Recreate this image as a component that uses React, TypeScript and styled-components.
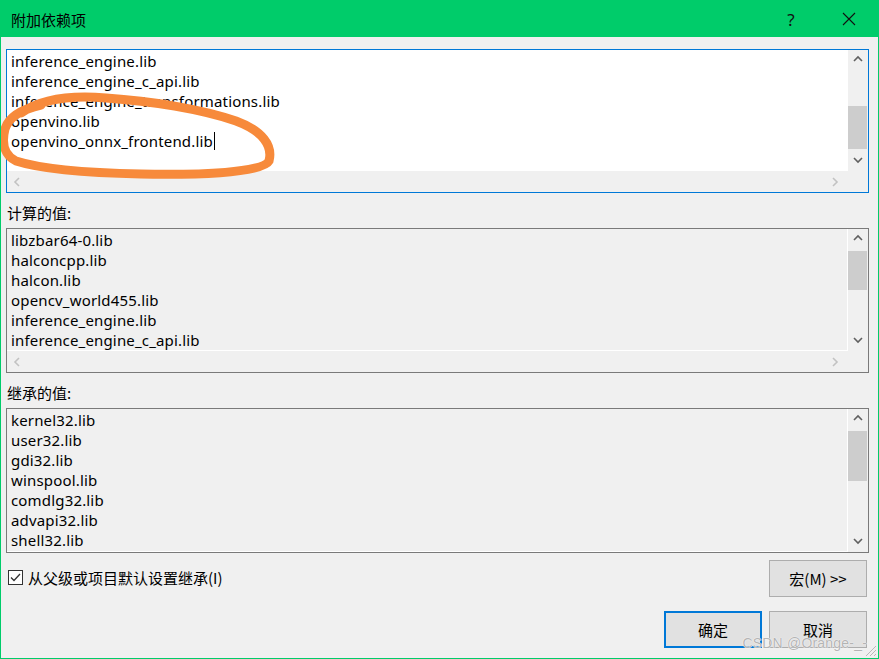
import React from "react";
import styled, { createGlobalStyle } from "styled-components";

const GlobalStyle = createGlobalStyle`
  html, body { margin: 0; padding: 0; background: #ffffff; }
  body { font-family: "Noto Sans", "Noto Sans CJK SC", sans-serif; }
  * { box-sizing: border-box; }
`;

const ACCENT = "#00CC6A";

const Window = styled.div`
  position: relative;
  width: 879px;
  height: 659px;
  border: 1px solid ${ACCENT};
  background: #f0f0f0;
  display: flex;
  flex-direction: column;
  overflow: hidden;
`;

const TitleBar = styled.div`
  height: 36px;
  background: ${ACCENT};
  display: flex;
  align-items: center;
  padding-left: 10px;
  flex: none;
`;

const TitleText = styled.div`
  flex: 1;
  font-family: "Noto Sans CJK SC", sans-serif;
  font-size: 15px;
  color: #000;
`;

const CaptionButton = styled.div`
  width: 58px;
  height: 36px;
  display: flex;
  align-items: center;
  justify-content: center;
  font-family: "Noto Sans", sans-serif;
  font-size: 17px;
  color: #111;
`;

const Content = styled.div`
  flex: 1;
  display: flex;
  flex-direction: column;
  padding: 12px 9px 0 5px;
`;

const ListBox = styled.div<{ $focused?: boolean; $h?: boolean; $height: number }>`
  height: ${(p) => p.$height}px;
  flex: none;
  border: 1px solid ${(p) => (p.$focused ? "#0078d7" : "#7a7a7a")};
  background: #f0f0f0;
  display: grid;
  grid-template-columns: 1fr 20px;
  grid-template-rows: ${(p) => (p.$h ? "1fr 21px" : "1fr")};
`;

const ListArea = styled.div<{ $white?: boolean }>`
  background: ${(p) => (p.$white ? "#ffffff" : "#f0f0f0")};
  border-right: 1px solid #ffffff;
  border-bottom: 1px solid #ffffff;
  padding: 1px 4px;
  overflow: hidden;
  font-family: "Noto Sans", "Noto Sans CJK SC", sans-serif;
  font-size: 15px;
  letter-spacing: 0.17px;
  line-height: 20px;
  color: #000;
`;

const Line = styled.div`
  white-space: nowrap;
  height: 20px;
  display: flex;
  align-items: center;
`;

const Caret = styled.span`
  display: inline-block;
  width: 1px;
  height: 18px;
  background: #000;
  margin-left: 1px;
`;

const VScroll = styled.div`
  background: #f0f0f0;
  display: flex;
  flex-direction: column;
`;

const ArrowBox = styled.div`
  height: 20px;
  flex: none;
  display: flex;
  align-items: center;
  justify-content: center;
`;

const Track = styled.div`
  flex: 1;
  display: flex;
  flex-direction: column;
`;

const Thumb = styled.div<{ $offset: number; $size: number }>`
  margin-top: ${(p) => p.$offset}px;
  height: ${(p) => p.$size}px;
  width: 19px;
  background: #cdcdcd;
`;

const HScroll = styled.div`
  grid-column: 1 / 3;
  background: #f0f0f0;
  display: flex;
  align-items: center;
  justify-content: space-between;
  padding: 0 28px 0 6px;
`;

const Label = styled.div`
  margin-top: 10px;
  margin-bottom: 5px;
  height: 20px;
  line-height: 20px;
  padding-left: 1px;
  font-family: "Noto Sans CJK SC", sans-serif;
  font-size: 15px;
  color: #000;
`;

const OptionRow = styled.div`
  margin-top: 7px;
  display: flex;
  justify-content: space-between;
  align-items: flex-start;
  padding-right: 2px;
`;

const CheckLabel = styled.label`
  display: flex;
  align-items: center;
  gap: 5px;
  margin-top: 7px;
  margin-left: 2px;
  font-family: "Noto Sans CJK SC", sans-serif;
  font-size: 15px;
  color: #000;
`;

const CheckBox = styled.span`
  width: 15px;
  height: 15px;
  border: 1px solid #333;
  background: #fff;
  display: flex;
  align-items: center;
  justify-content: center;
`;

const Button = styled.div<{ $default?: boolean }>`
  width: 98px;
  height: 37px;
  background: #e1e1e1;
  border: ${(p) => (p.$default ? "2px solid #0078d7" : "1px solid #adadad")};
  display: flex;
  align-items: center;
  justify-content: center;
  font-family: "Noto Sans CJK SC", sans-serif;
  font-size: 15px;
  color: #000;
`;

const ButtonRow = styled.div`
  margin-top: 14px;
  display: flex;
  justify-content: flex-end;
  gap: 7px;
  padding-right: 2px;
`;

const Watermark = styled.div`
  position: absolute;
  right: 11px;
  bottom: 7px;
  font-family: "Liberation Sans", Arial, sans-serif;
  font-size: 14px;
  color: #b4b4b4;
  text-shadow: 0 0 1px #ffffff, 0 0 1px #ffffff;
  letter-spacing: 0.2px;
`;

const Overlay = styled.svg`
  position: absolute;
  left: 0;
  top: 0;
  pointer-events: none;
`;

const Grip = styled.svg`
  position: absolute;
  right: 1px;
  bottom: 1px;
`;

const Chevron = ({ dir, light }: { dir: "up" | "down" | "left" | "right"; light?: boolean }) => {
  const color = light ? "#c2c2c2" : "#606060";
  const d =
    dir === "up"
      ? "M1 6 L5 2 L9 6"
      : dir === "down"
      ? "M1 2 L5 6 L9 2"
      : dir === "left"
      ? "M6 1 L2 5 L6 9"
      : "M3 1 L7 5 L3 9";
  return (
    <svg width="10" height="10" viewBox="0 0 10 10">
      <path d={d} fill="none" stroke={color} strokeWidth="1.6" />
    </svg>
  );
};

type BoxProps = {
  lines: string[];
  white?: boolean;
  focused?: boolean;
  hScroll?: boolean;
  height: number;
  thumbOffset: number;
  thumbSize: number;
  caretLast?: boolean;
};

const List = ({ lines, white, focused, hScroll, height, thumbOffset, thumbSize, caretLast }: BoxProps) => (
  <ListBox $focused={focused} $h={hScroll} $height={height}>
    <ListArea $white={white}>
      {lines.map((l, i) => (
        <Line key={i}>
          {l}
          {caretLast && i === lines.length - 1 ? <Caret /> : null}
        </Line>
      ))}
    </ListArea>
    <VScroll>
      <ArrowBox>
        <Chevron dir="up" />
      </ArrowBox>
      <Track>
        <Thumb $offset={thumbOffset} $size={thumbSize} />
      </Track>
      <ArrowBox>
        <Chevron dir="down" />
      </ArrowBox>
    </VScroll>
    {hScroll ? (
      <HScroll>
        <Chevron dir="left" light />
        <Chevron dir="right" light />
      </HScroll>
    ) : null}
  </ListBox>
);

export default function App() {
  return (
    <>
      <GlobalStyle />
      <Window>
        <TitleBar>
          <TitleText>附加依赖项</TitleText>
          <CaptionButton>?</CaptionButton>
          <CaptionButton>
            <svg width="14" height="14" viewBox="0 0 14 14">
              <path d="M1 1 L13 13 M13 1 L1 13" stroke="#111" strokeWidth="1.1" fill="none" />
            </svg>
          </CaptionButton>
        </TitleBar>
        <Content>
          <List
            white
            focused
            hScroll
            height={144}
            thumbOffset={36}
            thumbSize={43}
            caretLast
            lines={[
              "inference_engine.lib",
              "inference_engine_c_api.lib",
              "inference_engine_transformations.lib",
              "openvino.lib",
              "openvino_onnx_frontend.lib",
            ]}
          />
          <Label>计算的值:</Label>
          <List
            hScroll
            height={145}
            thumbOffset={2}
            thumbSize={39}
            lines={[
              "libzbar64-0.lib",
              "halconcpp.lib",
              "halcon.lib",
              "opencv_world455.lib",
              "inference_engine.lib",
              "inference_engine_c_api.lib",
            ]}
          />
          <Label>继承的值:</Label>
          <List
            height={145}
            thumbOffset={2}
            thumbSize={50}
            lines={[
              "kernel32.lib",
              "user32.lib",
              "gdi32.lib",
              "winspool.lib",
              "comdlg32.lib",
              "advapi32.lib",
              "shell32.lib",
            ]}
          />
          <OptionRow>
            <CheckLabel>
              <CheckBox>
                <svg width="11" height="9" viewBox="0 0 11 9">
                  <path d="M1 4.5 L4 7.5 L10 1" fill="none" stroke="#333" strokeWidth="1.3" />
                </svg>
              </CheckBox>
              从父级或项目默认设置继承(I)
            </CheckLabel>
            <Button>宏(M) &gt;&gt;</Button>
          </OptionRow>
          <ButtonRow>
            <Button $default>确定</Button>
            <Button>取消</Button>
          </ButtonRow>
        </Content>
        <Watermark>CSDN @Orange-_-</Watermark>
        <Grip width="14" height="14" viewBox="0 0 14 14">
          <path d="M13 3 L3 13 M13 7 L7 13 M13 11 L11 13" stroke="#b8b8b8" strokeWidth="1" />
        </Grip>
        <Overlay width="879" height="659" viewBox="0 0 879 659">
          <path
            d="M20 112 C 40 98, 70 94, 105 97 C 150 100, 200 108, 235 120 C 262 130, 272 145, 268 160 C 262 172, 200 174, 140 173 C 90 172, 40 168, 15 160 C 2 154, 1 140, 4 128 C 8 115, 22 108, 40 104"
            fill="none"
            stroke="#f78a3b"
            strokeWidth="9"
            strokeLinecap="round"
            strokeLinejoin="round"
          />
        </Overlay>
      </Window>
    </>
  );
}
